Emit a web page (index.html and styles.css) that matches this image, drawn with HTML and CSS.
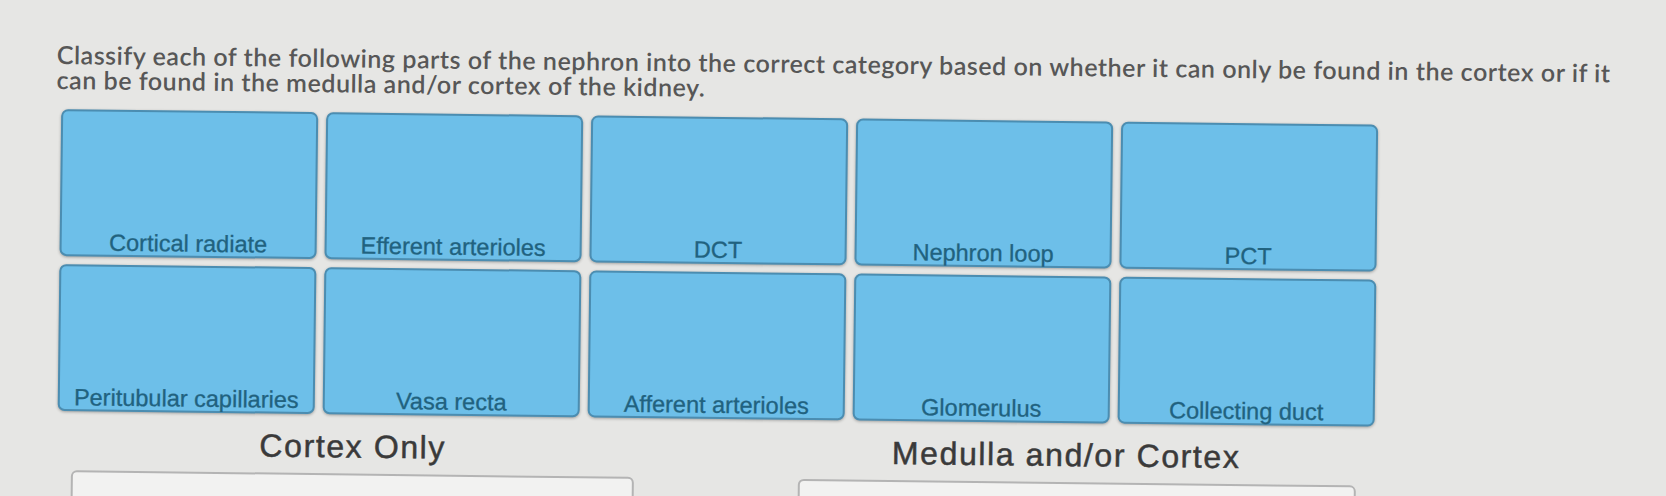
FILE: index.html
```html
<!DOCTYPE html>
<html>
<head>
  <meta charset="UTF-8">
  <title>Nephron Sorting</title>
  <link rel="stylesheet" href="styles.css">
</head>
<body>
  <div id="question">
    <p class="prompt">Classify each of the following parts of the nephron into the correct category based on whether it can only be found in the cortex or if it can be found in the medulla and/or cortex of the kidney.</p>

    <div id="bank">
      <div class="tile">Cortical radiate</div>
      <div class="tile">Efferent arterioles</div>
      <div class="tile">DCT</div>
      <div class="tile">Nephron loop</div>
      <div class="tile">PCT</div>
      <div class="tile">Peritubular capillaries</div>
      <div class="tile">Vasa recta</div>
      <div class="tile">Afferent arterioles</div>
      <div class="tile">Glomerulus</div>
      <div class="tile">Collecting duct</div>
    </div>

    <div id="bins">
      <div class="bin bin-left">
        <h2>Cortex Only</h2>
        <div class="drop"></div>
      </div>
      <div class="bin bin-right">
        <h2>Medulla and/or Cortex</h2>
        <div class="drop"></div>
      </div>
    </div>
  </div>
</body>
</html>
```

FILE: styles.css
```css
body {
  background: #e6e6e4;
  margin: 0;
  padding: 0;
  overflow: hidden;
}
/* the whole question sits a little tilted on the screen */
#question {
  padding: 42px 0 0 57px;
  transform: rotate(0.68deg);
  transform-origin: 57px 45px;
}
.prompt {
  margin: 0;
  width: 1590px;
  font-family: Lato, sans-serif;
  font-weight: 600;
  font-size: 25px;
  line-height: 25px;
  letter-spacing: 0.55px;
  color: #575757;
}
#bank {
  display: grid;
  grid-template-columns: repeat(5, 257px);
  grid-auto-rows: 147px;
  column-gap: 8px;
  row-gap: 8px;
  margin: 17px 0 0 5px;
}
.tile {
  background: #6dbfe9;
  border: 2px solid #4b8db1;
  border-radius: 7px;
  box-shadow: 0 1px 3px rgba(0, 0, 0, 0.3);
  display: flex;
  align-items: flex-end;
  justify-content: center;
  font-family: "Liberation Sans", Arial, sans-serif;
  font-size: 23.5px;
  line-height: 1;
  color: #21627f;
  -webkit-text-stroke: 0.3px #21627f;
}
#bins {
  display: flex;
  margin-left: 19px;
}
.bin h2 {
  margin: 14px 0 9px;
  text-align: center;
  font-family: "Liberation Sans", Arial, sans-serif;
  font-weight: normal;
  font-size: 32px;
  line-height: 36px;
  letter-spacing: 1.6px;
  color: #3a3a3a;
  -webkit-text-stroke: 0.5px #3a3a3a;
}
.bin-left {
  width: 563px;
}
.bin-right {
  width: 558px;
  margin-left: 164px;
}
.bin-right h2 {
  padding-right: 22px;
}
.drop {
  height: 60px;
  background: #f2f2f1;
  border: 2px solid #b4b4b4;
  border-radius: 6px;
}
```
